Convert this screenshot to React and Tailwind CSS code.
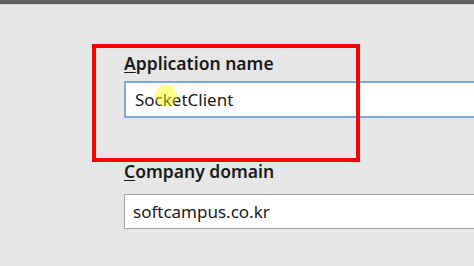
export default function App() {
  return (
    <div className="relative w-[474px] h-[266px] overflow-hidden bg-[#e6e6e6]" style={{ fontFamily: '"Noto Sans", sans-serif' }}>
      <div className="h-[4px] bg-[#606060]" />
      <div className="h-[1px] bg-[#d0d0d0]" />
      <div className="pl-[124px] pt-[44px]">
        <div className="text-[17.5px] font-semibold text-[#1a1a1a] leading-[20px] pt-[4px]">
          <span className="underline underline-offset-[2px]">A</span>pplication name
        </div>
        <div className="mt-[8px] w-[370px] h-[37px] border-2 border-[#7fa7dc] bg-white flex items-center pl-[9px] text-[17px] text-[#1a1a1a]">
          SocketClient
        </div>
        <div className="mt-[43px] text-[17.5px] font-semibold text-[#1a1a1a] leading-[20px]">
          <span className="underline underline-offset-[2px]">C</span>ompany domain
        </div>
        <div className="mt-[13px] w-[370px] h-[35px] border border-[#a5a5a5] bg-white flex items-center pl-[8px] text-[17px] text-[#1a1a1a]">
          softcampus.co.kr
        </div>
      </div>
      <div className="absolute left-[92px] top-[44px] w-[268px] h-[118px] border-4 border-[#ff0000]" />
      <div className="absolute left-[155px] top-[85px] w-[22px] h-[22px] rounded-full bg-[#ffff00]/45" />
    </div>
  );
}
